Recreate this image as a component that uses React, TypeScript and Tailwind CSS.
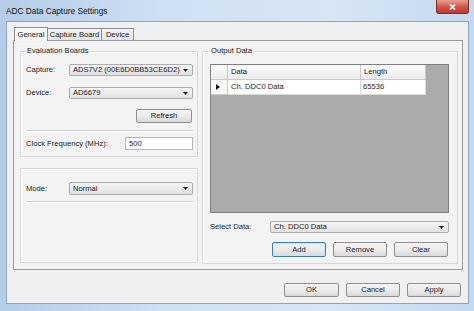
import React from "react";

const FONT = { fontFamily: '"Liberation Sans", Arial, sans-serif' };

function Arrow() {
    return (
        <svg width="5" height="3" viewBox="0 0 5 3" className="shrink-0">
            <path d="M0 0 H5 L2.5 3 Z" fill="#222" />
        </svg>
    );
}

function Combo({ value, className = "" }: { value: string; className?: string }) {
    return (
        <div
            className={
                "flex items-center justify-between pl-[3px] pr-[4px] border border-[#acacac] rounded-[2px] bg-gradient-to-b from-[#f5f5f5] to-[#e2e2e2] text-[#1a1a1a] " +
                className
            }
        >
            <span className="leading-none whitespace-nowrap">{value}</span>
            <Arrow />
        </div>
    );
}

function Btn({ label, focus = false, className = "" }: { label: string; focus?: boolean; className?: string }) {
    return (
        <div
            className={
                "flex items-center justify-center w-[54px] rounded-[2px] border bg-gradient-to-b from-[#f4f4f4] via-[#ececec] to-[#d9d9d9] text-[#1a1a1a] " +
                (focus ? "border-[#3c7fb1] shadow-[inset_0_0_0_1px_#c4e8f8]" : "border-[#8f8f8f]") +
                " " +
                className
            }
        >
            <span className="leading-none">{label}</span>
        </div>
    );
}

function Separator() {
    return <div className="h-[2px] border-t border-[#d0d0d0] bg-white" />;
}

export default function App() {
    return (
        <div
            style={FONT}
            className="w-[474px] h-[311px] flex flex-col bg-[linear-gradient(to_right,#b4cde8,#cfe0f3_35%,#d7e6f5_70%,#c4d8ee)] text-[7.6px] text-[#1a1a1a] overflow-hidden"
        >
            {/* Title bar */}
            <div className="h-[21px] shrink-0 flex items-start justify-between pl-[6px] pr-[5px]">
                <span className="text-[8.3px] mt-[7px] leading-none text-[#111]">ADC Data Capture Settings</span>
                <div className="w-[33px] h-[14px] rounded-b-[3px] border border-t-0 border-[#7d2b25] bg-gradient-to-b from-[#e6a094] via-[#cf5a4d] to-[#b83a2e] flex items-center justify-center">
                    <svg width="7" height="6" viewBox="0 0 7 6">
                        <path d="M1 0.5 L6 5.5 M6 0.5 L1 5.5" stroke="#fff" strokeWidth="1.6" />
                    </svg>
                </div>
            </div>

            {/* Client area */}
            <div className="ml-[6px] mr-[5px] h-[283px] shrink-0 border border-[#8da3bf] bg-[#f0f0f0] flex flex-col">
                {/* Tabs */}
                <div className="flex items-end h-[13px] mt-[5px] ml-[7px]">
                    <div className="w-[34px] h-[14px] -mb-[1px] z-10 bg-[#f7f7f7] border border-b-0 border-[#8c8e94] flex items-center justify-center">
                        <span className="leading-none">General</span>
                    </div>
                    <div className="w-[54px] h-[12px] bg-gradient-to-b from-[#f3f3f3] to-[#e4e4e4] border border-l-0 border-b-0 border-[#8c8e94] flex items-center justify-center">
                        <span className="leading-none">Capture Board</span>
                    </div>
                    <div className="w-[32px] h-[12px] bg-gradient-to-b from-[#f3f3f3] to-[#e4e4e4] border border-l-0 border-b-0 border-[#8c8e94] flex items-center justify-center">
                        <span className="leading-none">Device</span>
                    </div>
                </div>

                {/* Tab page */}
                <div className="ml-[6px] mr-[5px] h-[230px] border border-[#9a9ca2] bg-[#f3f3f3] flex gap-[4px] pt-[10px] pl-[6px] pr-[4px]">
                    {/* Left column */}
                    <div className="w-[178px] flex flex-col gap-[11px]">
                        {/* Evaluation Boards */}
                        <div className="relative h-[106px] border border-[#d8d8d8] shadow-[inset_1px_1px_0_#fff] flex flex-col pl-[5px] pr-[4px]">
                            <span className="absolute -top-[5px] left-[5px] px-[1px] bg-[#f3f3f3] leading-none">Evaluation Boards</span>
                            <div className="flex items-center mt-[12px] h-[12px]">
                                <span className="w-[43px] leading-none">Capture:</span>
                                <Combo value="ADS7V2 (00E6D0BB53CE6D2)" className="w-[124px] h-[12px]" />
                            </div>
                            <div className="flex items-center mt-[11px] h-[12px]">
                                <span className="w-[43px] leading-none">Device:</span>
                                <Combo value="AD6679" className="w-[124px] h-[12px]" />
                            </div>
                            <div className="flex justify-end mt-[10px] pr-[1px]">
                                <Btn label="Refresh" className="h-[14px] w-[56px]" />
                            </div>
                            <div className="mt-[7px]">
                                <Separator />
                            </div>
                            <div className="flex items-center mt-[5px] h-[13px]">
                                <span className="w-[99px] leading-none">Clock Frequency (MHz):</span>
                                <div className="w-[68px] h-[13px] bg-white border border-[#b6b8be] flex items-center pl-[3px]">
                                    <span className="leading-none">500</span>
                                </div>
                            </div>
                        </div>

                        {/* Mode */}
                        <div className="h-[95px] border border-[#d8d8d8] shadow-[inset_1px_1px_0_#fff] flex flex-col pl-[5px] pr-[4px]">
                            <div className="flex items-center mt-[13px] h-[13px]">
                                <span className="w-[43px] leading-none">Mode:</span>
                                <Combo value="Normal" className="w-[124px] h-[13px]" />
                            </div>
                            <div className="mt-[6px]">
                                <Separator />
                            </div>
                        </div>
                    </div>

                    {/* Output Data */}
                    <div className="relative w-[256px] h-[213px] border border-[#d8d8d8] shadow-[inset_1px_1px_0_#fff] flex flex-col pl-[7px] pr-[8px]">
                        <span className="absolute -top-[5px] left-[7px] px-[1px] bg-[#f3f3f3] leading-none">Output Data</span>

                        {/* Grid */}
                        <div className="mt-[12px] w-[239px] h-[149px] border border-[#7f7f7f] bg-[#ababab] flex flex-col">
                            <div className="flex h-[15px]">
                                <div className="w-[17px] bg-gradient-to-b from-[#fbfbfb] to-[#ececec] border-r border-b border-[#c9c9c9]" />
                                <div className="w-[133px] bg-gradient-to-b from-[#fbfbfb] to-[#ececec] border-r border-b border-[#c9c9c9] flex items-center pl-[3px]">
                                    <span className="leading-none">Data</span>
                                </div>
                                <div className="w-[65px] bg-gradient-to-b from-[#fbfbfb] to-[#ececec] border-r border-b border-[#c9c9c9] flex items-center pl-[3px]">
                                    <span className="leading-none">Length</span>
                                </div>
                            </div>
                            <div className="flex h-[15px]">
                                <div className="w-[17px] bg-[#f7f7f7] border-r border-b border-[#c9c9c9] flex items-center pl-[5px]">
                                    <svg width="4" height="6" viewBox="0 0 4 6">
                                        <path d="M0 0 L4 3 L0 6 Z" fill="#111" />
                                    </svg>
                                </div>
                                <div className="w-[133px] bg-white border-r border-b border-[#dadada] flex items-center pl-[3px]">
                                    <span className="leading-none">Ch. DDC0 Data</span>
                                </div>
                                <div className="w-[65px] bg-white border-r border-b border-[#dadada] flex items-center pl-[2px]">
                                    <span className="leading-none">65536</span>
                                </div>
                            </div>
                        </div>

                        <div className="flex items-center mt-[8px] h-[12px]">
                            <span className="w-[60px] leading-none">Select Data:</span>
                            <Combo value="Ch. DDC0 Data" className="w-[179px] h-[12px]" />
                        </div>

                        <div className="flex justify-end gap-[7px] mt-[9px] pr-[1px]">
                            <Btn label="Add" focus className="h-[15px]" />
                            <Btn label="Remove" className="h-[15px]" />
                            <Btn label="Clear" className="h-[15px]" />
                        </div>
                    </div>
                </div>

                {/* Dialog buttons */}
                <div className="flex justify-end gap-[7px] mt-[13px] mr-[7px]">
                    <Btn label="OK" className="w-[55px] h-[14px]" />
                    <Btn label="Cancel" className="h-[14px]" />
                    <Btn label="Apply" className="h-[14px]" />
                </div>
            </div>
        </div>
    );
}
